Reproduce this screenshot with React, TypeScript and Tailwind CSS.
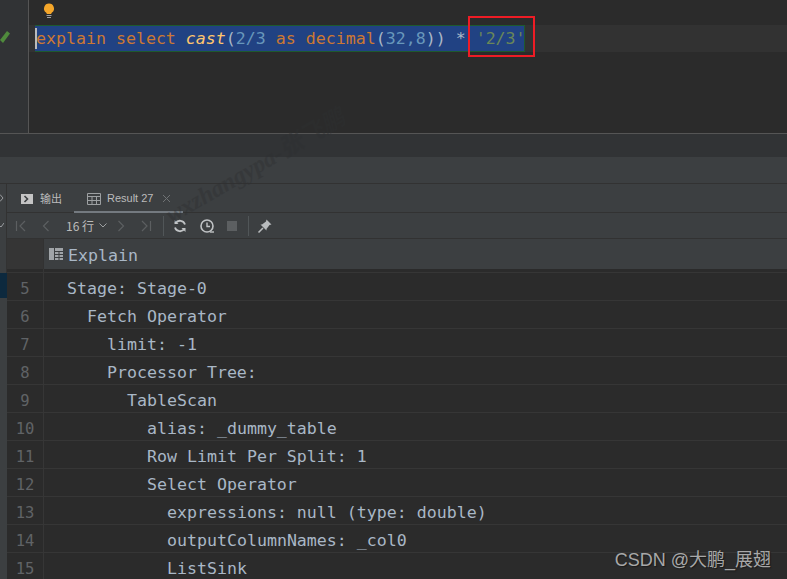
import React from 'react';

const mono = 'font-["DejaVu_Sans_Mono",monospace]';

const rows = [
  { n: 5, indent: 'pl-[23px]', text: 'Stage: Stage-0' },
  { n: 6, indent: 'pl-[43px]', text: 'Fetch Operator' },
  { n: 7, indent: 'pl-[63px]', text: 'limit: -1' },
  { n: 8, indent: 'pl-[63px]', text: 'Processor Tree:' },
  { n: 9, indent: 'pl-[83px]', text: 'TableScan' },
  { n: 10, indent: 'pl-[103px]', text: 'alias: _dummy_table' },
  { n: 11, indent: 'pl-[103px]', text: 'Row Limit Per Split: 1' },
  { n: 12, indent: 'pl-[103px]', text: 'Select Operator' },
  { n: 13, indent: 'pl-[123px]', text: 'expressions: null (type: double)' },
  { n: 14, indent: 'pl-[123px]', text: 'outputColumnNames: _col0' },
  { n: 15, indent: 'pl-[123px]', text: 'ListSink' },
];

const Bulb = () => (
  <svg width="12" height="16" viewBox="0 0 12 16" className="ml-[14px]">
    <path d="M6 0.5a5 5 0 0 0-3 9c.6.5.8 1 .8 1.5h4.4c0-.5.2-1 .8-1.5a5 5 0 0 0-3-9z" fill="#f4a62a" />
    <rect x="3.5" y="12" width="5" height="1" fill="#a0a0a0" />
    <rect x="4" y="14" width="4" height="1" fill="#a0a0a0" />
  </svg>
);

const ToolIcon = ({ children, className = '' }: { children: React.ReactNode; className?: string }) => (
  <svg width="16" height="16" viewBox="0 0 16 16" fill="none" className={className}>
    {children}
  </svg>
);

const App = () => {
  return (
    <div className={`relative w-[787px] h-[579px] overflow-hidden flex flex-col bg-[#2b2b2b] ${mono}`}>
      {/* Editor */}
      <div className="h-[134px] shrink-0 flex border-b border-[#555555]">
        <div className="w-[29px] shrink-0 bg-[#313335] border-r border-[#555555] pt-[25px]">
          <svg width="10" height="12" viewBox="0 0 10 12" className="mt-[6px]">
            <path d="M0 9 L3 12 L10 2.5 L7 0 Z" fill="#4f8a3c" />
          </svg>
        </div>
        <div className="flex-1 min-w-0 flex flex-col">
          <div className="h-[25px] pt-[3px] shrink-0">
            <Bulb />
          </div>
          <div className="h-[27px] shrink-0 bg-[#323232] pl-[6px] flex">
            <div className="relative h-[27px] w-[490px] pl-[1px] pt-[2px] bg-[#214283] border-y border-[#1e5a2e] border-r flex items-center text-[16.6px] leading-none whitespace-pre">
              <span className="absolute left-0 top-[2px] w-[2px] h-[21px] bg-[#bbbbbb]" />
              <span className="text-[#cc7832]">explain select </span>
              <span className="text-[#ffc66d] italic">cast</span>
              <span className="text-[#a9b7c6]">(</span>
              <span className="text-[#6897bb]">2/3</span>
              <span className="text-[#cc7832]"> as decimal</span>
              <span className="text-[#a9b7c6]">(</span>
              <span className="text-[#6897bb]">32,8</span>
              <span className="text-[#a9b7c6]">)) * </span>
              <span className="text-[#6a8759]">'2/3'</span>
            </div>
          </div>
        </div>
      </div>

      {/* Empty bands between the editor and the tool window */}
      <div className="h-[23px] shrink-0 bg-[#313335]" />
      <div className="h-[27px] shrink-0 bg-[#3c3f41] border-b border-[#323232]" />

      {/* Tool window */}
      <div className="flex-1 min-h-0 flex bg-[#3c3f41]">
        <div className="w-[7px] shrink-0 flex flex-col">
          <div className="h-[89px] border-r border-[#323232] text-[#8a8d8f] relative">
            <svg width="4" height="8" viewBox="0 0 4 8" className="absolute top-[10px] left-0">
              <path d="M0 0.5 L3 4 L0 7.5" stroke="#9a9da0" strokeWidth="1" fill="none" />
            </svg>
            <svg width="4" height="6" viewBox="0 0 4 6" className="absolute top-[38px] left-0">
              <path d="M0 4 L1 5 L4 1" stroke="#9a9da0" strokeWidth="1" fill="none" />
            </svg>
          </div>
          <div className="h-[25px] bg-[#0d293e]" />
        </div>
        <div className="flex-1 min-w-0 flex flex-col">
          {/* Tabs */}
          <div className="h-[29px] shrink-0 flex items-stretch border-b border-[#323232] font-['Noto_Sans_CJK_SC','Liberation_Sans',sans-serif] text-[11px] text-[#bbbbbb]">
            <div className="w-[67px] flex items-center pl-[14px] pt-[1px] gap-[7px]">
              <svg width="12" height="10" viewBox="0 0 12 10">
                <rect width="12" height="10" fill="#c4c4c4" />
                <path d="M3.5 2 L6.5 5 L3.5 8" stroke="#3c3f41" strokeWidth="1.6" fill="none" />
              </svg>
              <span>输出</span>
            </div>
            <div className="relative w-[109px] flex items-center pl-[13px] pt-[1px] gap-[6px]">
              <svg width="14" height="12" viewBox="0 0 14 12" fill="none" stroke="#9da0a2">
                <path d="M.5.5h13v11H.5zM.5 3.5h13M.5 7.5h13M5 3.5v8M9.5 3.5v8" />
              </svg>
              <span className="font-['Liberation_Sans',sans-serif] text-[11px]">Result 27</span>
              <svg width="9" height="9" viewBox="0 0 9 9" className="ml-[3px]">
                <path d="M1 1 L8 8 M8 1 L1 8" stroke="#6f7274" strokeWidth="1" />
              </svg>
              <span className="absolute left-0 right-0 bottom-[-1px] h-[2px] bg-[#747a80]" />
            </div>
          </div>

          {/* Toolbar */}
          <div className="h-[26px] shrink-0 flex items-center border-b border-[#323232] pl-[6px] font-['Liberation_Sans',sans-serif] text-[#bbbbbb]">
            <ToolIcon>
              <path d="M3.5 3v10M12 3 L7 8 L12 13" stroke="#5c5f61" strokeWidth="1.2" />
            </ToolIcon>
            <ToolIcon className="ml-[9px]">
              <path d="M10.5 3 L5.5 8 L10.5 13" stroke="#5c5f61" strokeWidth="1.2" />
            </ToolIcon>
            <span className="ml-[12px] flex items-center gap-[5px] w-[38px] text-[12px] whitespace-pre font-['Noto_Sans_CJK_SC',sans-serif]">
              16 行
              <svg width="8" height="5" viewBox="0 0 8 5" className="shrink-0">
                <path d="M.5.5 L4 4 L7.5.5" stroke="#9da0a2" fill="none" />
              </svg>
            </span>
            <ToolIcon className="ml-[9px]">
              <path d="M5.5 3 L10.5 8 L5.5 13" stroke="#5c5f61" strokeWidth="1.2" />
            </ToolIcon>
            <ToolIcon className="ml-[9px]">
              <path d="M12.5 3v10M4 3 L9 8 L4 13" stroke="#5c5f61" strokeWidth="1.2" />
            </ToolIcon>
            <span className="ml-[9px] w-px h-[20px] bg-[#515658]" />
            <ToolIcon className="ml-[8px]">
              <path d="M13 6.5A5.2 5.2 0 0 0 3.6 5.2M3 9.5A5.2 5.2 0 0 0 12.4 10.8" stroke="#c0c3c5" strokeWidth="1.8" />
              <path d="M2.5 2v4h4M13.5 14v-4h-4" fill="#c0c3c5" />
            </ToolIcon>
            <ToolIcon className="ml-[11px]">
              <circle cx="8" cy="8" r="6" stroke="#c0c3c5" strokeWidth="1.6" />
              <path d="M8 4.5V8.5H11" stroke="#c0c3c5" strokeWidth="1.4" />
              <path d="M11 14h4" stroke="#c0c3c5" strokeWidth="1.4" />
            </ToolIcon>
            <span className="ml-[12px] w-[10px] h-[10px] bg-[#5c5f61]" />
            <span className="ml-[11px] w-px h-[20px] bg-[#515658]" />
            <ToolIcon className="ml-[8px]">
              <path d="M9.5 1.5 L14.5 6.5 L12.5 7 L9.5 11 L9.5 12.5 L3.5 6.5 L5 6.5 L9 3.5 Z" fill="#b8bbbd" />
              <path d="M6 10 L1.5 14.5" stroke="#b8bbbd" strokeWidth="1.6" />
            </ToolIcon>
          </div>

          {/* Column header */}
          <div className="h-[30px] shrink-0 flex">
            <div className="w-[37px] shrink-0 bg-[#353535] border-r border-[#323232]" />
            <div className="flex-1 flex items-center pl-[5px] gap-[5px] text-[#a9b7c6] text-[16.6px] leading-none bg-[#3c3f41]">
              <svg width="14" height="12" viewBox="0 0 14 12">
                <rect width="14" height="12" fill="#a0a4a8" />
                <path d="M5.5 0v12" stroke="#3c3f41" />
                <path d="M6 3.5h8M6 6.5h8M6 9.5h8M10 3v9" stroke="#3c3f41" />
              </svg>
              <span className="pt-[4px]">Explain</span>
            </div>
          </div>

          {/* Result rows */}
          <div className="flex-1 min-h-0 overflow-hidden bg-[#2b2b2b]">
            <div className="h-[4px] flex border-b border-[#363636]">
              <div className="w-[37px] border-r border-[#363636]" />
            </div>
            {rows.map((row) => (
              <div key={row.n} className="h-[28px] flex border-b border-[#363636] text-[16.6px] leading-none">
                <div className="w-[37px] shrink-0 pt-[6px] border-r border-[#363636] flex items-center justify-center text-[#606366] text-[15.5px]">
                  {row.n}
                </div>
                <div className={`flex-1 flex items-center pt-[6px] whitespace-pre text-[#a9b7c6] ${row.indent}`}>{row.text}</div>
              </div>
            ))}
          </div>
        </div>
      </div>

      {/* Red annotation box drawn over the screenshot */}
      <div className="absolute left-[468px] top-[16px] w-[67px] h-[41px] border-[2px] border-[#ee1c25]" />

      {/* Page watermarks */}
      <div className="absolute right-[16px] bottom-[9px] font-['Liberation_Sans','Noto_Sans_CJK_SC',sans-serif] text-[18px] leading-[20px] text-[#a8a8a8] [text-shadow:1px_1px_1px_#1a1a1a]">
        CSDN @大鹏_展翅
      </div>
      <div className="absolute left-[154px] top-[154px] -rotate-[30deg] font-['Liberation_Serif','Noto_Sans_CJK_SC',serif] italic font-bold text-[24px] leading-none whitespace-pre text-[#2e3032] opacity-40">
        wxzhangypa-张飞鹏
      </div>
    </div>
  );
};

export default App;
